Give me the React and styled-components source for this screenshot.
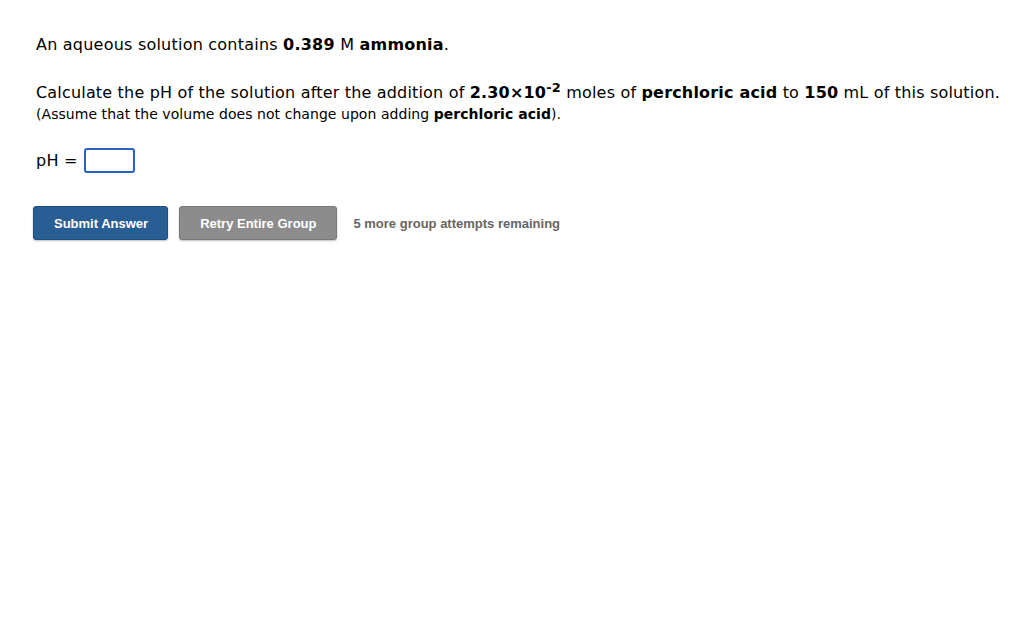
import styled, { createGlobalStyle } from 'styled-components';

const GlobalStyle = createGlobalStyle`
    body {
        margin: 0;
        background: #fff;
        font-family: Verdana, "DejaVu Sans", sans-serif;
        color: #000;
    }
`;

const Page = styled.div`
    padding: 34px 10px 34px 36px;
`;
const Para = styled.p`
    margin: 0;
    font-size: 16px;
    line-height: 22px;
    letter-spacing: 0.22px;
    white-space: nowrap;
`;
const Question = styled(Para)`
    margin-top: 26px;
    letter-spacing: 0.18px;
`;
const Note = styled.p`
    margin: 1px 0 0;
    font-size: 14px;
    line-height: 19px;
    letter-spacing: 0.05px;
`;
const AnswerRow = styled.div`
    display: flex;
    align-items: center;
    gap: 6px;
    margin-top: 24px;
    font-size: 16px;
    letter-spacing: 0.22px;
`;
const AnswerBox = styled.input`
    width: 51px;
    height: 25px;
    box-sizing: border-box;
    border: 2px solid #2a5fc4;
    border-radius: 3px;
    outline: none;
`;
const Actions = styled.div`
    display: flex;
    align-items: center;
    gap: 11px;
    margin-top: 33px;
    margin-left: -3px;
`;
const Button = styled.button`
    height: 34px;
    padding: 0 ${(p) => (p.$primary ? '19px' : '20px')} 0 20px;
    border: 1px solid ${(p) => (p.$primary ? '#1f4f80' : '#7a7a7a')};
    border-radius: 3px;
    background: ${(p) => (p.$primary ? '#285e94' : '#8c8c8c')};
    color: #fff;
    font-family: "Liberation Sans", Arial, sans-serif;
    font-weight: bold;
    font-size: 13px;
    box-shadow: 0 1px 2px rgba(0, 0, 0, 0.25);
`;
const Remaining = styled.span`
    margin-left: 5px;
    font-family: "Liberation Sans", Arial, sans-serif;
    font-weight: bold;
    font-size: 13px;
    color: #666;
`;

export default function App() {
    return (
        <Page>
            <GlobalStyle />
            <Para>
                An aqueous solution contains <b>0.389</b> M <b>ammonia</b>.
            </Para>
            <Question>
                Calculate the pH of the solution after the addition of{' '}
                <b>
                    2.30×10<sup style={{ fontSize: '13px', lineHeight: 0 }}>-2</sup>
                </b>{' '}
                moles of <b>perchloric acid</b> to <b>150</b> mL of this solution.
            </Question>
            <Note>
                (Assume that the volume does not change upon adding <b>perchloric acid</b>).
            </Note>
            <AnswerRow>
                pH =
                <AnswerBox type="text" />
            </AnswerRow>
            <Actions>
                <Button $primary>Submit Answer</Button>
                <Button>Retry Entire Group</Button>
                <Remaining>5 more group attempts remaining</Remaining>
            </Actions>
        </Page>
    );
}
